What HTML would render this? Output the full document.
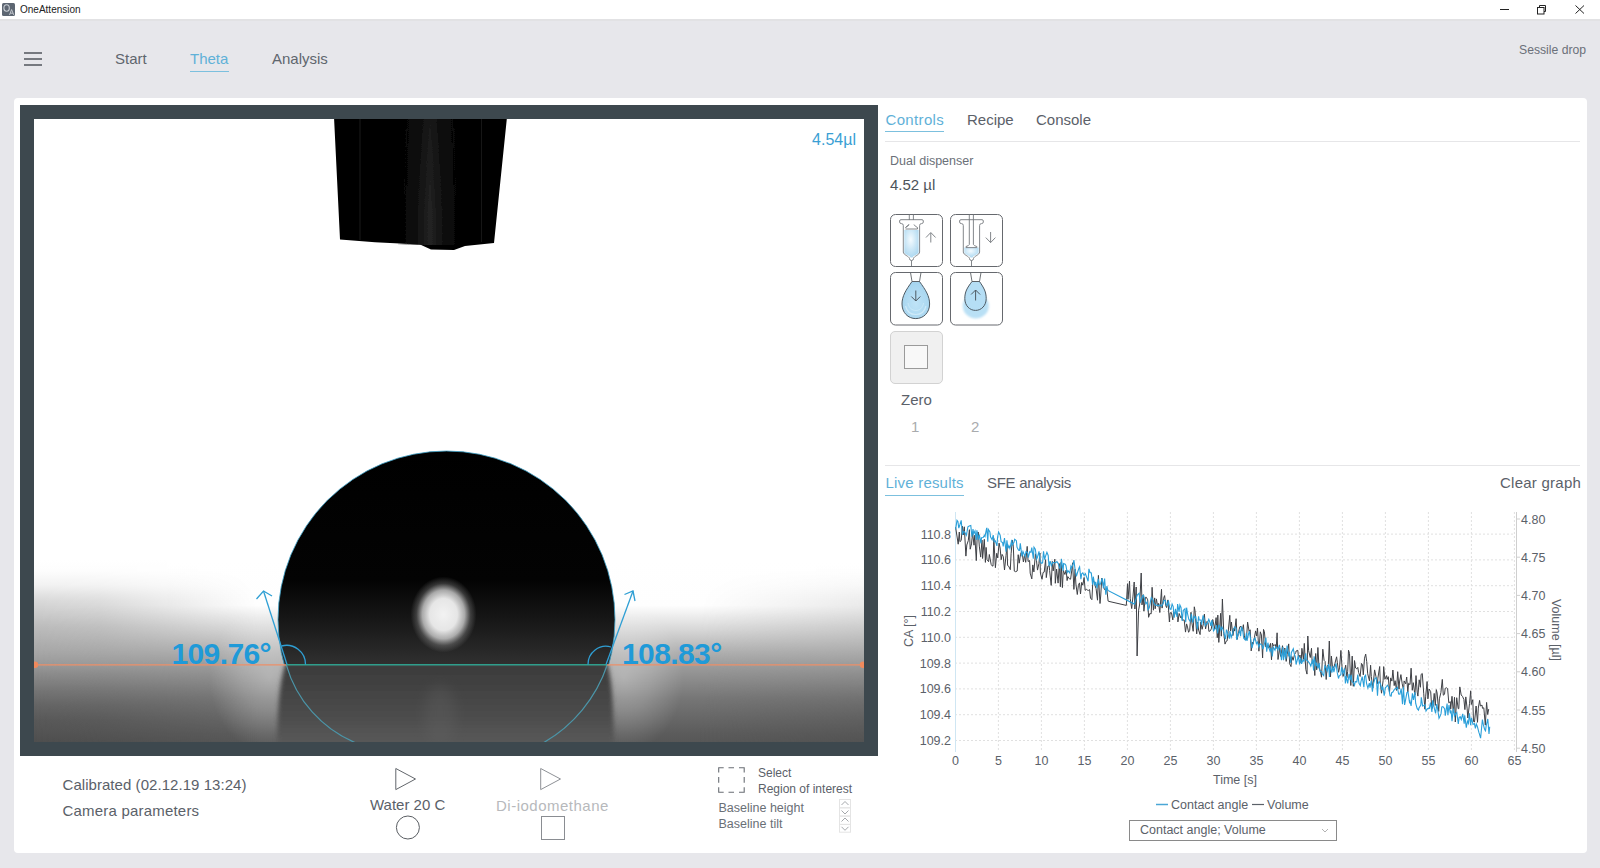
<!DOCTYPE html>
<html><head><meta charset="utf-8">
<style>
*{margin:0;padding:0;box-sizing:border-box}
html,body{width:1600px;height:868px;overflow:hidden;background:#e7e7eb;font-family:"Liberation Sans",sans-serif;color:#5b6169}
.a{position:absolute;white-space:nowrap}
#title{position:absolute;left:0;top:0;width:1600px;height:19px;background:#fff}
#panel{position:absolute;left:14px;top:98px;width:1573px;height:755px;background:#fff;border-radius:4px}
</style></head><body>
<div id="title">
  <svg class="a" style="left:2px;top:3px" width="14" height="14" viewBox="0 0 14 14"><rect x="0" y="0" width="13" height="13" rx="1.5" fill="#5d6672"/><ellipse cx="4.6" cy="5" rx="2.7" ry="3.3" fill="none" stroke="#c9ced4" stroke-width="1.1"/><path d="M7.5 12 L9.6 6.5 L11.8 12 M8.3 10.2 H11" fill="none" stroke="#c9ced4" stroke-width="0.9"/></svg>
  <div class="a" style="left:20px;top:4px;font-size:10px;color:#222">OneAttension</div>
  <div class="a" style="left:1500px;top:8.5px;width:8.5px;height:1px;background:#222"></div>
  <svg class="a" style="left:1536px;top:4px" width="11" height="11"><rect x="1.5" y="3.5" width="6.5" height="6.5" fill="none" stroke="#222"/><path d="M3.5 3.5V1.5H9.5V7.5H8" fill="none" stroke="#222"/></svg>
  <svg class="a" style="left:1575px;top:5px" width="10" height="9"><path d="M0.5 0.5L9 8.5M9 0.5L0.5 8.5" stroke="#222" stroke-width="1"/></svg>
</div>
<div class="a" style="left:0;top:19px;width:1600px;height:1.5px;background:#e2e2e4"></div>
<!-- header -->
<div class="a" style="left:24px;top:52px;width:18px;height:2px;background:#76797f"></div>
<div class="a" style="left:24px;top:58px;width:18px;height:2px;background:#76797f"></div>
<div class="a" style="left:24px;top:64px;width:18px;height:2px;background:#76797f"></div>
<div class="a" style="left:115px;top:50px;font-size:15px;color:#5f666e">Start</div>
<div class="a" style="left:190px;top:50px;font-size:15px;color:#5fb1d8">Theta</div>
<div class="a" style="left:190px;top:70.5px;width:39px;height:1.5px;background:#7cc0de"></div>
<div class="a" style="left:272px;top:50px;font-size:15px;color:#5f666e">Analysis</div>
<div class="a" style="left:1519px;top:43px;font-size:12.2px;color:#6b7079">Sessile drop</div>

<div id="panel"></div>

<!-- camera -->
<svg class="a" style="left:20px;top:105px" width="858" height="651" viewBox="20 105 858 651">
  <defs>
    <linearGradient id="bg" x1="0" y1="560" x2="0" y2="742" gradientUnits="userSpaceOnUse">
      <stop offset="0" stop-color="#fff"/>
      <stop offset="0.06" stop-color="#fdfdfd"/>
      <stop offset="0.137" stop-color="#f2f2f2"/>
      <stop offset="0.22" stop-color="#dadada"/>
      <stop offset="0.368" stop-color="#bcbcbc"/>
      <stop offset="0.511" stop-color="#a6a6a6"/>
      <stop offset="0.571" stop-color="#9a9a9a"/>
      <stop offset="0.632" stop-color="#8a8a8a"/>
      <stop offset="0.714" stop-color="#767676"/>
      <stop offset="0.797" stop-color="#656565"/>
      <stop offset="0.879" stop-color="#595959"/>
      <stop offset="1" stop-color="#4f4f4f"/>
    </linearGradient>
    <linearGradient id="bgc" x1="0" y1="560" x2="0" y2="742" gradientUnits="userSpaceOnUse">
      <stop offset="0" stop-color="#fff"/>
      <stop offset="0.25" stop-color="#fefefe"/>
      <stop offset="0.38" stop-color="#d8d8d8"/>
      <stop offset="0.505" stop-color="#b0b0b0"/>
      <stop offset="0.57" stop-color="#9e9e9e"/>
      <stop offset="0.76" stop-color="#767676"/>
      <stop offset="0.95" stop-color="#5c5c5c"/>
      <stop offset="1" stop-color="#575757"/>
    </linearGradient>
    <linearGradient id="hmask" x1="34" y1="0" x2="864" y2="0" gradientUnits="userSpaceOnUse">
      <stop offset="0" stop-color="#000"/>
      <stop offset="0.08" stop-color="#222"/>
      <stop offset="0.27" stop-color="#fff"/>
      <stop offset="0.80" stop-color="#fff"/>
      <stop offset="1" stop-color="#888"/>
    </linearGradient>
    <mask id="rmask"><rect x="34" y="119" width="830" height="623" fill="url(#hmask)"/></mask>
    <filter id="grain" x="0" y="0" width="100%" height="100%"><feTurbulence type="fractalNoise" baseFrequency="0.9" numOctaves="1" seed="3"/><feColorMatrix values="0 0 0 0 0.5  0 0 0 0 0.5  0 0 0 0 0.5  0.33 0.33 0.33 0 -0.5"/></filter>
    <filter id="blur8" x="-100%" y="-100%" width="300%" height="300%"><feGaussianBlur stdDeviation="9"/></filter>
    <linearGradient id="dropg" x1="0" y1="451" x2="0" y2="665" gradientUnits="userSpaceOnUse">
      <stop offset="0" stop-color="#000"/>
      <stop offset="0.6" stop-color="#030303"/>
      <stop offset="0.8" stop-color="#181818"/>
      <stop offset="1" stop-color="#303030"/>
    </linearGradient>
    <linearGradient id="reflg" x1="0" y1="665" x2="0" y2="742" gradientUnits="userSpaceOnUse">
      <stop offset="0" stop-color="#3c3c3c"/>
      <stop offset="0.5" stop-color="#474747"/>
      <stop offset="1" stop-color="#585858"/>
    </linearGradient>
    <linearGradient id="ndl" x1="395" y1="0" x2="465" y2="0" gradientUnits="userSpaceOnUse">
      <stop offset="0" stop-color="#050505" stop-opacity="0"/>
      <stop offset="0.5" stop-color="#242424"/>
      <stop offset="1" stop-color="#050505" stop-opacity="0"/>
    </linearGradient>
    <linearGradient id="ndlmg" x1="0" y1="119" x2="0" y2="245" gradientUnits="userSpaceOnUse">
      <stop offset="0" stop-color="#aaa"/>
      <stop offset="0.75" stop-color="#fff"/>
      <stop offset="1" stop-color="#fff"/>
    </linearGradient>
    <mask id="ndlm"><rect x="390" y="117" width="80" height="130" fill="url(#ndlmg)"/></mask>
    <radialGradient id="hlg" cx="0.5" cy="0.5" r="0.5">
      <stop offset="0" stop-color="#f2f2f2"/>
      <stop offset="0.42" stop-color="#e6e6e6"/>
      <stop offset="0.64" stop-color="#d0d0d0" stop-opacity="0.8"/>
      <stop offset="0.82" stop-color="#c0c0c0" stop-opacity="0.25"/>
      <stop offset="1" stop-color="#c0c0c0" stop-opacity="0"/>
    </radialGradient>
    <radialGradient id="halo" cx="0.62" cy="0.45" r="0.5">
      <stop offset="0" stop-color="#fff" stop-opacity="0.32"/>
      <stop offset="0.45" stop-color="#fff" stop-opacity="0.2"/>
      <stop offset="1" stop-color="#fff" stop-opacity="0"/>
    </radialGradient>
    <radialGradient id="halo2" cx="0.38" cy="0.45" r="0.5">
      <stop offset="0" stop-color="#fff" stop-opacity="0.32"/>
      <stop offset="0.45" stop-color="#fff" stop-opacity="0.2"/>
      <stop offset="1" stop-color="#fff" stop-opacity="0"/>
    </radialGradient>
    <clipPath id="imgclip"><rect x="34" y="119" width="830" height="623"/></clipPath>
    <clipPath id="above"><rect x="34" y="119" width="830" height="546"/></clipPath>
    <clipPath id="below"><rect x="34" y="665" width="830" height="77"/></clipPath>
    <filter id="blur2" x="-20%" y="-20%" width="140%" height="140%"><feGaussianBlur stdDeviation="2"/></filter>
    <filter id="blur4" x="-50%" y="-50%" width="200%" height="200%"><feGaussianBlur stdDeviation="5"/></filter>
    <filter id="blur3" x="-20%" y="-20%" width="140%" height="140%"><feGaussianBlur stdDeviation="3.5"/></filter>
    <filter id="blur5" x="-80%" y="-80%" width="260%" height="260%"><feGaussianBlur stdDeviation="6.5"/></filter>
    <filter id="blur1"><feGaussianBlur stdDeviation="0.6"/></filter>
  </defs>
  <rect x="20" y="105" width="858" height="651" fill="#3d484e"/>
  <g clip-path="url(#imgclip)">
    <rect x="34" y="119" width="830" height="623" fill="url(#bg)"/>
    <rect x="34" y="540" width="830" height="202" fill="url(#bgc)" mask="url(#rmask)"/>
    <ellipse cx="255" cy="685" rx="60" ry="75" fill="url(#halo)"/>
    <ellipse cx="638" cy="685" rx="60" ry="75" fill="url(#halo2)"/>
    <!-- needle -->
    <g filter="url(#blur1)">
    <path d="M334 117 L498 117 L507 117 L494 243 L465 246 L454 250 L431 249.5 L420 244.4 L375 242.2 L340 239.5 Z" fill="#040404"/>
    <rect x="398" y="117" width="66" height="128" fill="url(#ndl)" mask="url(#ndlm)"/>
    <rect x="359.5" y="117" width="1" height="123" fill="#151515"/>
    <rect x="481" y="117" width="1" height="125" fill="#121212"/>
    </g>
    <!-- reflection -->
    <g clip-path="url(#below)" filter="url(#blur2)">
      <path d="M286 662 C280 680 278 700 277 745 L614 745 C613 700 612 680 607 662 Z" fill="url(#reflg)"/>
    </g>
    <ellipse cx="440" cy="715" rx="16" ry="30" fill="#666" opacity="0.3" filter="url(#blur5)"/>
    <!-- drop -->
    <g clip-path="url(#above)">
      <circle cx="446.5" cy="619.5" r="168.5" fill="url(#dropg)"/>
    </g>
    <ellipse cx="443.5" cy="614.5" rx="33" ry="38" fill="url(#hlg)"/>
    <!-- fitted contour -->
    <g clip-path="url(#above)"><circle cx="446.5" cy="619.5" r="168.5" fill="none" stroke="#3b9fc6" stroke-width="1" opacity="0.8"/></g>
    <path d="M286.3 664.8 A120 120 0 0 0 356 743" fill="none" stroke="#4b95a8" stroke-width="1.2"/>
    <path d="M607.3 664.8 A142 142 0 0 1 543 743" fill="none" stroke="#4b95a8" stroke-width="1.2"/>
    <!-- baseline -->
    <line x1="34" y1="664.8" x2="287" y2="664.8" stroke="#ec8f68" stroke-width="1.2"/>
    <line x1="606" y1="664.8" x2="864" y2="664.8" stroke="#ec8f68" stroke-width="1.2"/>
    <line x1="286" y1="664.8" x2="607" y2="664.8" stroke="#2f9e8c" stroke-width="1.5"/>
    <circle cx="35" cy="664.8" r="3.2" fill="#f08a5d"/>
    <circle cx="863" cy="664.8" r="3.2" fill="#f08a5d"/>
    <!-- tangents -->
    <path d="M287 664.5 L263.5 591" fill="none" stroke="#2f9fd4" stroke-width="1.3"/>
    <path d="M256.5 599 L263.5 591 L272 596" fill="none" stroke="#2f9fd4" stroke-width="1.3"/>
    <path d="M606 664.5 L633 591" fill="none" stroke="#2f9fd4" stroke-width="1.3"/>
    <path d="M624.5 594.5 L633 591 L635 601" fill="none" stroke="#2f9fd4" stroke-width="1.3"/>
    <path d="M281.5 646 A19 19 0 0 1 305.5 664.5" fill="none" stroke="#2f9fd4" stroke-width="1.3"/>
    <path d="M588 664.5 A18 18 0 0 1 611 647" fill="none" stroke="#2f9fd4" stroke-width="1.3"/>
  </g>
  <text x="271" y="664" font-family="Liberation Sans" font-weight="bold" font-size="30" letter-spacing="-0.6" fill="#1f9ad8" text-anchor="end">109.76°</text>
  <text x="622" y="664" font-family="Liberation Sans" font-weight="bold" font-size="30" letter-spacing="-0.6" fill="#1f9ad8">108.83°</text>
  <text x="856" y="145" font-family="Liberation Sans" font-size="16" fill="#3a9fd4" text-anchor="end">4.54µl</text>
</svg>

<!-- bottom left -->
<div class="a" style="left:62.5px;top:776px;font-size:15px;letter-spacing:0.05px">Calibrated (02.12.19 13:24)</div>
<div class="a" style="left:62.5px;top:801.5px;font-size:15px;letter-spacing:0.2px">Camera parameters</div>
<svg class="a" style="left:390px;top:764px" width="30" height="30" viewBox="390 764 30 30"><path d="M395.8 768.5 L415.5 779 L395.8 789.6 Z" fill="none" stroke="#62666b" stroke-width="1"/></svg>
<div class="a" style="left:370px;top:795.5px;font-size:15px;color:#5b6169">Water 20 C</div>
<svg class="a" style="left:392px;top:813px" width="32" height="32" viewBox="392 813 32 32"><circle cx="407.9" cy="827.5" r="11.5" fill="none" stroke="#5a5e63" stroke-width="1"/></svg>
<svg class="a" style="left:535px;top:764px" width="30" height="30" viewBox="535 764 30 30"><path d="M540.7 768.5 L560.5 779 L540.7 789.6 Z" fill="none" stroke="#8e9196" stroke-width="1"/></svg>
<div class="a" style="left:496px;top:796.5px;font-size:15px;letter-spacing:0.5px;color:#b7b9bc">Di-iodomethane</div>
<div class="a" style="left:541px;top:816px;width:24px;height:23.5px;border:1px solid #8a8d92"></div>
<svg class="a" style="left:715px;top:765px" width="32" height="32" viewBox="715 765 32 32"><path d="M718.7 772.5 V767.7 H723.7 M728.5 767.7 H734 M739 767.7 H744.2 V772.5 M718.7 777 V782.7 M744.2 777 V782.7 M718.7 787.3 V792.3 H723.7 M728.5 792.3 H734 M739 792.3 H744.2 V787.3" fill="none" stroke="#6a6e74" stroke-width="1.1"/></svg>
<div class="a" style="left:758px;top:766px;font-size:12px;color:#5b6169">Select</div>
<div class="a" style="left:758px;top:782px;font-size:12px;color:#5b6169">Region of interest</div>
<div class="a" style="left:718.5px;top:800.5px;font-size:12.5px;color:#6a6f76">Baseline height</div>
<div class="a" style="left:718.5px;top:817px;font-size:12.5px;color:#6a6f76">Baseline tilt</div>
<svg class="a" style="left:836px;top:797px" width="18" height="38" viewBox="836 797 18 38"><g fill="none" stroke="#e4e4e4" stroke-width="1"><rect x="839.5" y="799.5" width="11" height="8.3"/><rect x="839.5" y="807.8" width="11" height="8.3"/><rect x="839.5" y="816.1" width="11" height="8.3"/><rect x="839.5" y="824.4" width="11" height="7.8"/></g><path d="M841.5 805 L845 801.5 L848.5 805 M841.5 810.5 L845 814 L848.5 810.5 M841.5 821.5 L845 818 L848.5 821.5 M841.5 826.8 L845 830.3 L848.5 826.8" fill="none" stroke="#9a9da2" stroke-width="0.9"/></svg>

<!-- right panel -->
<div class="a" style="left:885.5px;top:110.5px;font-size:15px;letter-spacing:0.35px;color:#5fb1d8">Controls</div>
<div class="a" style="left:885px;top:130.5px;width:59px;height:1.5px;background:#7cc0de"></div>
<div class="a" style="left:967px;top:110.5px;font-size:15px">Recipe</div>
<div class="a" style="left:1036px;top:110.5px;font-size:15px">Console</div>
<div class="a" style="left:885px;top:141px;width:695px;height:1px;background:#e6e6e8"></div>
<div class="a" style="left:890px;top:154px;font-size:12.5px;color:#6b7078">Dual dispenser</div>
<div class="a" style="left:890px;top:176px;font-size:15px;color:#4d535a">4.52 µl</div>

<svg class="a" style="left:880px;top:205px" width="130" height="125" viewBox="880 205 130 125">
  <defs>
    <radialGradient id="liq" cx="0.45" cy="0.35" r="0.7">
      <stop offset="0" stop-color="#f4fbff"/>
      <stop offset="0.5" stop-color="#cde8f7"/>
      <stop offset="1" stop-color="#a9d6ef"/>
    </radialGradient>
    <radialGradient id="drp" cx="0.5" cy="0.6" r="0.6">
      <stop offset="0" stop-color="#bfe3f7"/>
      <stop offset="1" stop-color="#a4d4ef"/>
    </radialGradient>
    <filter id="ib"><feGaussianBlur stdDeviation="1.2"/></filter>
  </defs>
  <g fill="none" stroke="#66696e" stroke-width="1">
    <rect x="890.5" y="214.5" width="52" height="52" rx="5"/>
    <rect x="950.5" y="214.5" width="52" height="52" rx="5"/>
    <rect x="890.5" y="272.5" width="52" height="52.5" rx="5"/>
    <rect x="950.5" y="272.5" width="52" height="52.5" rx="5"/>
  </g>
  <!-- syringe 1 -->
  <path d="M904.3 230 H918.6 V252 C918.6 254.5 913 255.5 912.5 257.5 H910.5 C910 255.5 904.3 254.5 904.3 252 Z" fill="url(#liq)"/>
  <g fill="none" stroke="#75797e" stroke-width="0.9">
    <path d="M909.3 214.5 V220 M913.4 214.5 V220"/>
    <path d="M901 219.7 H922 Q923.3 219.7 923.3 221 V222 Q923.3 223.6 921.5 223.6 Q919.6 223.6 919.6 225.5 V252 C919.6 255 914 256 913.5 258.5 Q913.5 260.5 911.5 260.5 Q909.5 260.5 909.5 258.5 C909 256 903.3 255 903.3 252 V225.5 Q903.3 223.6 901.5 223.6 Q899.6 223.6 899.6 222 V221 Q899.6 219.7 901 219.7 M911.5 260.5 V266"/>
    <path d="M905.5 229 H917.5 V227.5 Q915 226.5 914 224.5 M909 224.5 Q908 226.5 905.5 227.5 Z"/>
    <path d="M930.8 242.5 V233 M926 237.5 L930.8 232.5 L935.6 237.5"/>
  </g>
  <!-- syringe 2 -->
  <path d="M964.3 247.5 H978.6 V252 C978.6 254.5 973 255.5 972.5 257.5 H970.5 C970 255.5 964.3 254.5 964.3 252 Z" fill="url(#liq)"/>
  <g fill="none" stroke="#75797e" stroke-width="0.9">
    <path d="M969.3 214.5 V244.5 M973.4 214.5 V244.5 M969.3 244.5 Q968.5 246 966 246.5 V247.6 H976.8 V246.5 Q974.3 246 973.4 244.5"/>
    <path d="M961 219.7 H982 Q983.3 219.7 983.3 221 V222 Q983.3 223.6 981.5 223.6 Q979.6 223.6 979.6 225.5 V252 C979.6 255 974 256 973.5 258.5 Q973.5 260.5 971.5 260.5 Q969.5 260.5 969.5 258.5 C969 256 963.3 255 963.3 252 V225.5 Q963.3 223.6 961.5 223.6 Q959.6 223.6 959.6 222 V221 Q959.6 219.7 961 219.7 M971.5 260.5 V266"/>
    <path d="M990.6 232 V242.5 M985.8 237.6 L990.6 242.6 L995.4 237.6"/>
  </g>
  <!-- drop 1 -->
  <path d="M912 281.5 C906 290 902 296 902 304 C902 312.5 908 318.6 915.8 318.6 C923.6 318.6 929.6 312.5 929.6 304 C929.6 296 925.6 290 919.5 281.5 Z" fill="url(#drp)" stroke="#4e5a63" stroke-width="1"/>
  <path d="M905.5 306 C907 312 911 314.5 915.8 314.5 C920.6 314.5 924.6 312 926 306" fill="none" stroke="#d6eefa" stroke-width="1.2" opacity="0.8"/>
  <path d="M908 303 C909 308 912 310.5 915.8 310.5 C919.6 310.5 922.6 308 923.6 303" fill="none" stroke="#d6eefa" stroke-width="1" opacity="0.6"/>
  <g fill="none" stroke="#5f6368" stroke-width="0.9">
    <path d="M910.5 272.5 L912 281.5 H919.5 L921 272.5"/>
  </g>
  <g fill="none" stroke="#4e5a63" stroke-width="1">
    <path d="M915.8 290.5 V301 M911.3 296.5 L915.8 301 L920.3 296.5"/>
  </g>
  <!-- drop 2 -->
  <ellipse cx="975.8" cy="306" rx="13" ry="12.5" fill="#b9e0f5" filter="url(#ib)"/>
  <path d="M972 281.5 C967 288 964.8 292 964.8 298.5 C964.8 305.5 969.5 310.4 975.5 310.4 C981.5 310.4 986.2 305.5 986.2 298.5 C986.2 292 984 288 979.5 281.5 Z" fill="#b5def5" stroke="#4e5a63" stroke-width="1"/>
  <g fill="none" stroke="#5f6368" stroke-width="0.9">
    <path d="M970.5 272.5 L972 281.5 H979.5 L981 272.5"/>
  </g>
  <g fill="none" stroke="#4e5a63" stroke-width="1">
    <path d="M975.6 300.5 V290 M971.1 294.5 L975.6 290 L980.1 294.5"/>
  </g>
</svg>
<div class="a" style="left:890px;top:331px;width:52.5px;height:52.5px;border:1px solid #d2d2d2;border-radius:5px;background:#f0f0f0"></div>
<div class="a" style="left:904px;top:345px;width:24px;height:24px;border:1px solid #9a9a9a;background:#f8f8f8"></div>
<div class="a" style="left:901px;top:391px;font-size:15px;color:#5b6169">Zero</div>
<div class="a" style="left:911px;top:418px;font-size:15px;color:#a9abae">1</div>
<div class="a" style="left:971px;top:418px;font-size:15px;color:#a9abae">2</div>

<div class="a" style="left:885px;top:465px;width:695px;height:1px;background:#e6e6e8"></div>
<div class="a" style="left:885.5px;top:473.5px;font-size:15px;letter-spacing:0.2px;color:#5fb1d8">Live results</div>
<div class="a" style="left:885px;top:494.5px;width:79px;height:1.5px;background:#7cc0de"></div>
<div class="a" style="left:987px;top:473.5px;font-size:15px;letter-spacing:-0.3px">SFE analysis</div>
<div class="a" style="left:1500px;top:473.5px;font-size:15px;letter-spacing:0.25px">Clear graph</div>

<!-- chart -->
<svg class="a" style="left:880px;top:500px" width="720" height="350" viewBox="880 500 720 350">
  <g stroke="#e0e0e0" stroke-width="1" stroke-dasharray="2 2">
    <line x1="955" y1="534.1" x2="1515" y2="534.1"/><line x1="955" y1="559.9" x2="1515" y2="559.9"/><line x1="955" y1="585.7" x2="1515" y2="585.7"/><line x1="955" y1="611.5" x2="1515" y2="611.5"/><line x1="955" y1="637.3" x2="1515" y2="637.3"/><line x1="955" y1="663.1" x2="1515" y2="663.1"/><line x1="955" y1="688.9" x2="1515" y2="688.9"/><line x1="955" y1="714.7" x2="1515" y2="714.7"/><line x1="955" y1="740.5" x2="1515" y2="740.5"/>
    <line x1="998.4" y1="512" x2="998.4" y2="752"/><line x1="1041.4" y1="512" x2="1041.4" y2="752"/><line x1="1084.4" y1="512" x2="1084.4" y2="752"/><line x1="1127.4" y1="512" x2="1127.4" y2="752"/><line x1="1170.4" y1="512" x2="1170.4" y2="752"/><line x1="1213.4" y1="512" x2="1213.4" y2="752"/><line x1="1256.4" y1="512" x2="1256.4" y2="752"/><line x1="1299.4" y1="512" x2="1299.4" y2="752"/><line x1="1342.4" y1="512" x2="1342.4" y2="752"/><line x1="1385.4" y1="512" x2="1385.4" y2="752"/><line x1="1428.4" y1="512" x2="1428.4" y2="752"/><line x1="1471.4" y1="512" x2="1471.4" y2="752"/><line x1="1514.4" y1="512" x2="1514.4" y2="752"/>
  </g>
  <line x1="955.5" y1="512" x2="955.5" y2="752" stroke="#cfe6f3" stroke-width="1"/>
  <line x1="1516.5" y1="512" x2="1516.5" y2="752" stroke="#cfcfcf" stroke-width="1"/>
  <line x1="1516" y1="519.0" x2="1520" y2="519.0" stroke="#cfcfcf"/><line x1="1516" y1="557.2" x2="1520" y2="557.2" stroke="#cfcfcf"/><line x1="1516" y1="595.4" x2="1520" y2="595.4" stroke="#cfcfcf"/><line x1="1516" y1="633.6" x2="1520" y2="633.6" stroke="#cfcfcf"/><line x1="1516" y1="671.8" x2="1520" y2="671.8" stroke="#cfcfcf"/><line x1="1516" y1="710.0" x2="1520" y2="710.0" stroke="#cfcfcf"/><line x1="1516" y1="748.2" x2="1520" y2="748.2" stroke="#cfcfcf"/>
  <path d="M955.6,527.3 L956.5,533.0 L958.2,544.2 L959.3,532.0 L959.9,541.7 L961.2,540.5 L962.4,526.2 L963.2,535.0 L964.3,526.8 L965.9,556.1 L966.8,545.0 L968.3,540.6 L969.4,529.7 L970.2,549.2 L971.5,543.9 L972.6,532.7 L974.0,545.2 L974.8,535.2 L976.3,560.6 L977.3,533.1 L978.3,532.0 L979.3,546.1 L980.7,557.1 L982.0,540.1 L982.6,558.5 L984.3,539.3 L985.4,562.4 L986.1,547.4 L987.0,559.6 L988.6,561.7 L989.3,554.5 L991.2,564.5 L991.9,565.7 L993.0,566.1 L993.8,538.5 L995.4,567.7 L996.7,553.3 L997.7,557.9 L999.1,543.1 L1000.1,548.0 L1001.2,559.7 L1002.1,554.4 L1003.3,556.6 L1004.5,570.0 L1006.0,555.7 L1007.0,545.6 L1007.6,565.5 L1008.7,566.2 L1010.3,569.7 L1011.1,553.7 L1012.3,540.1 L1013.3,546.1 L1014.3,571.1 L1015.6,571.7 L1017.2,571.0 L1018.2,554.7 L1019.2,563.2 L1020.5,554.3 L1021.6,551.6 L1022.4,554.7 L1023.4,562.0 L1024.5,554.8 L1025.7,562.3 L1027.2,546.4 L1028.1,561.5 L1029.6,560.5 L1030.2,573.1 L1031.8,578.9 L1032.8,564.9 L1033.9,571.9 L1035.4,553.8 L1036.5,560.7 L1037.5,570.1 L1038.9,563.6 L1039.9,553.0 L1040.4,573.1 L1042.0,579.3 L1043.1,572.5 L1044.2,572.1 L1045.6,559.6 L1046.3,577.6 L1047.8,566.2 L1049.2,565.7 L1049.6,570.5 L1051.2,585.4 L1052.3,561.4 L1053.2,570.9 L1054.8,559.2 L1055.3,583.3 L1056.6,569.0 L1058.1,583.1 L1059.3,563.6 L1060.4,586.7 L1061.1,562.4 L1062.4,587.6 L1063.3,570.4 L1064.9,574.5 L1066.2,570.0 L1067.1,580.6 L1067.8,576.6 L1069.3,578.8 L1070.6,579.2 L1071.8,570.1 L1072.6,562.8 L1073.9,589.4 L1075.1,569.2 L1075.9,584.0 L1077.3,594.5 L1078.4,585.3 L1079.5,582.9 L1080.5,594.0 L1081.7,582.4 L1082.8,585.2 L1084.1,577.5 L1085.2,590.4 L1086.3,589.3 L1087.2,590.0 L1088.7,590.4 L1089.6,589.6 L1090.5,598.1 L1091.9,599.7 L1092.9,580.1 L1094.4,582.3 L1095.1,585.8 L1096.1,588.7 L1097.5,600.2 L1098.4,575.4 L1100.0,603.5 L1100.7,596.0 L1101.8,578.1 L1103.2,585.1 L1104.3,589.2 L1105.3,590.3 L1106.9,589.8 L1108.1,601.1 L1108.9,601.4 L1126.3,605.4 L1127.5,583.7 L1128.0,599.3 L1129.5,581.0 L1130.2,598.3 L1131.7,608.6 L1133.0,596.1 L1134.2,582.0 L1134.9,609.0 L1136.2,587.0 L1137.1,656.0 L1138.6,610.2 L1139.7,604.0 L1141.2,573.0 L1142.0,604.9 L1143.3,594.7 L1143.9,611.1 L1145.4,597.3 L1146.4,597.3 L1147.7,599.8 L1148.6,617.3 L1149.7,613.6 L1151.2,613.8 L1152.1,587.3 L1153.4,610.2 L1154.7,597.9 L1155.2,608.8 L1156.4,598.9 L1157.7,606.4 L1158.6,603.4 L1159.8,612.5 L1161.5,589.3 L1162.1,608.1 L1163.5,598.7 L1164.6,595.6 L1165.8,605.8 L1166.6,607.6 L1167.9,599.9 L1169.4,622.0 L1170.1,612.9 L1171.4,612.6 L1172.8,619.9 L1173.6,611.8 L1174.6,614.8 L1175.6,611.9 L1177.6,613.2 L1177.9,621.9 L1179.2,613.5 L1180.8,617.9 L1181.4,616.4 L1182.5,620.2 L1184.2,619.9 L1185.5,632.1 L1186.6,623.9 L1187.5,627.1 L1188.6,632.3 L1189.7,630.3 L1191.0,612.3 L1191.8,622.2 L1193.2,631.3 L1194.3,606.8 L1195.0,610.6 L1196.7,633.9 L1197.7,622.1 L1198.6,630.1 L1200.1,634.6 L1200.8,622.1 L1202.1,629.3 L1203.5,623.4 L1204.4,614.1 L1205.6,628.9 L1207.0,621.4 L1208.1,622.9 L1208.9,631.4 L1210.2,630.9 L1211.3,628.9 L1212.7,619.5 L1213.2,621.7 L1214.7,628.8 L1216.1,617.6 L1217.3,637.7 L1217.8,615.1 L1218.8,642.4 L1220.6,613.3 L1221.3,636.2 L1222.4,599.0 L1223.8,633.4 L1225.0,644.1 L1226.2,641.2 L1227.1,640.9 L1228.2,631.5 L1229.8,615.3 L1230.5,631.0 L1231.4,622.0 L1232.9,635.6 L1234.0,628.3 L1234.7,631.1 L1236.1,618.7 L1237.2,639.4 L1238.8,631.1 L1239.8,626.8 L1241.1,626.4 L1242.2,631.1 L1243.4,624.7 L1244.3,635.2 L1245.1,639.4 L1246.4,639.7 L1247.6,622.1 L1249.1,631.3 L1250.2,629.8 L1251.2,650.9 L1252.4,642.3 L1253.0,644.2 L1254.4,637.7 L1255.6,630.9 L1256.7,636.0 L1257.5,628.0 L1258.9,651.2 L1260.3,631.8 L1261.4,635.0 L1262.6,657.9 L1263.5,629.4 L1264.4,631.7 L1265.8,647.0 L1267.3,647.2 L1267.9,646.0 L1269.0,648.2 L1270.5,643.4 L1271.5,659.8 L1272.4,643.1 L1273.7,645.9 L1275.2,644.4 L1276.2,648.4 L1277.1,632.8 L1278.0,659.5 L1279.7,648.1 L1280.6,656.4 L1281.5,651.9 L1282.5,645.7 L1283.7,657.1 L1284.8,648.0 L1286.2,661.4 L1287.2,654.5 L1288.7,643.9 L1289.7,663.9 L1291.0,666.6 L1291.9,656.5 L1293.1,660.3 L1294.5,654.6 L1295.7,652.6 L1296.1,651.0 L1297.8,650.3 L1298.5,657.9 L1300.0,655.0 L1301.1,662.9 L1301.9,648.3 L1303.4,659.4 L1304.3,643.4 L1305.8,669.5 L1307.0,674.1 L1307.8,636.0 L1308.6,650.6 L1310.3,657.5 L1311.5,648.3 L1312.2,663.5 L1313.7,660.8 L1314.8,675.5 L1315.7,653.5 L1316.7,669.8 L1317.9,647.5 L1319.0,667.6 L1320.5,671.4 L1321.5,677.2 L1322.8,649.2 L1324.1,660.4 L1325.1,661.4 L1326.2,679.5 L1327.2,665.7 L1328.4,664.5 L1329.3,641.0 L1330.5,676.8 L1331.4,656.1 L1332.6,668.1 L1334.0,667.0 L1334.9,663.5 L1336.6,656.8 L1337.3,662.2 L1338.6,672.3 L1339.5,667.9 L1340.9,650.4 L1342.3,671.1 L1343.1,676.4 L1344.0,673.2 L1345.7,665.2 L1346.9,677.7 L1347.7,671.3 L1348.5,650.2 L1349.5,653.5 L1350.8,685.5 L1352.2,656.1 L1353.3,686.3 L1354.5,660.6 L1355.6,668.0 L1356.8,668.9 L1357.8,667.4 L1358.6,672.4 L1360.1,676.5 L1361.5,663.4 L1362.5,664.8 L1363.3,674.8 L1364.5,658.2 L1365.7,654.1 L1366.7,661.5 L1367.7,673.8 L1369.5,681.0 L1370.6,665.2 L1371.3,676.5 L1372.8,688.1 L1373.4,682.3 L1374.6,669.9 L1376.0,676.8 L1377.4,683.9 L1377.9,678.1 L1379.7,666.5 L1380.3,682.9 L1381.5,693.2 L1383.1,680.7 L1383.7,666.6 L1384.9,679.3 L1386.6,675.6 L1387.1,679.4 L1388.3,676.7 L1389.5,692.4 L1390.7,677.9 L1391.9,681.1 L1392.9,670.0 L1394.2,685.6 L1395.1,680.7 L1396.5,690.4 L1397.7,671.7 L1399.0,689.1 L1399.5,682.0 L1400.9,674.6 L1402.2,683.8 L1403.6,690.3 L1404.1,680.9 L1405.7,683.8 L1406.7,677.0 L1407.8,691.9 L1408.6,683.3 L1410.0,684.6 L1411.1,668.2 L1412.3,690.3 L1413.3,682.7 L1414.9,695.2 L1416.0,675.6 L1417.2,692.1 L1417.9,696.1 L1419.2,679.8 L1420.4,687.3 L1421.1,674.4 L1422.3,673.5 L1423.7,693.2 L1424.9,709.2 L1425.7,696.2 L1427.1,681.5 L1427.9,698.9 L1429.1,689.0 L1430.7,691.7 L1431.8,708.8 L1433.1,705.9 L1434.2,693.4 L1435.3,705.4 L1436.3,689.6 L1437.1,693.0 L1438.7,711.4 L1439.4,698.8 L1440.9,692.5 L1442.3,679.4 L1443.3,695.2 L1444.5,694.3 L1445.2,688.4 L1446.5,687.8 L1447.6,688.6 L1448.8,702.8 L1450.3,701.7 L1450.7,709.1 L1452.0,696.3 L1453.3,712.6 L1454.5,697.3 L1455.3,722.0 L1456.7,697.7 L1458.2,708.7 L1458.8,708.7 L1459.8,686.9 L1461.2,695.0 L1462.5,696.4 L1463.9,699.5 L1464.9,709.6 L1465.8,696.9 L1467.1,708.2 L1467.8,718.0 L1469.5,703.6 L1470.7,690.8 L1471.3,704.5 L1472.8,699.7 L1473.5,721.5 L1474.5,722.0 L1476.1,706.0 L1477.5,722.3 L1478.3,708.1 L1479.6,700.4 L1480.4,706.0 L1482.0,705.1 L1482.5,708.3 L1483.8,707.8 L1485.3,725.1 L1486.6,702.4 L1487.7,714.5 L1488.7,709.1" fill="none" stroke="#3e4045" stroke-width="1"/>
  <path d="M955.6,529.4 L957.0,520.4 L957.9,521.5 L958.8,528.1 L959.8,525.0 L961.2,520.3 L962.4,534.8 L963.2,531.9 L964.4,531.6 L966.3,535.3 L967.1,531.4 L967.9,526.8 L969.2,526.1 L970.8,525.6 L971.9,536.7 L973.0,529.0 L973.7,533.8 L975.0,531.0 L976.3,539.9 L976.9,530.3 L978.4,539.6 L979.3,534.6 L981.0,543.3 L981.5,537.8 L983.1,537.5 L984.4,535.4 L985.0,536.4 L986.7,527.8 L987.8,541.7 L988.3,529.3 L989.9,531.9 L990.5,536.8 L992.1,539.7 L993.2,535.2 L994.1,541.7 L995.3,540.9 L996.9,545.9 L997.6,537.1 L998.6,532.0 L1000.2,535.3 L1001.1,541.6 L1002.6,542.6 L1003.2,546.3 L1004.5,538.0 L1006.0,551.8 L1006.9,540.4 L1008.0,548.3 L1008.9,545.6 L1009.9,548.5 L1011.8,539.9 L1012.2,545.2 L1014.0,542.4 L1014.7,539.3 L1016.4,540.7 L1017.0,547.2 L1018.6,550.3 L1019.5,550.4 L1020.3,543.4 L1021.9,556.4 L1023.0,551.6 L1024.1,554.2 L1025.1,556.3 L1026.0,551.6 L1027.5,552.4 L1028.2,557.7 L1029.8,551.6 L1030.9,552.4 L1031.8,547.6 L1033.3,558.8 L1034.0,547.2 L1035.3,549.1 L1036.7,558.9 L1037.5,557.0 L1039.0,551.3 L1040.0,561.0 L1041.4,563.3 L1042.6,562.8 L1043.5,551.4 L1044.7,559.6 L1045.3,556.8 L1046.9,552.3 L1048.2,555.5 L1049.0,566.1 L1050.2,561.2 L1051.3,565.6 L1052.8,562.4 L1053.4,562.5 L1054.7,562.7 L1055.5,562.6 L1056.9,561.5 L1058.3,563.6 L1059.6,568.1 L1060.8,567.9 L1061.4,558.9 L1063.1,570.8 L1063.6,563.5 L1065.2,564.2 L1065.9,565.4 L1067.2,572.6 L1068.1,570.8 L1069.8,573.0 L1070.9,566.4 L1071.5,567.9 L1073.0,564.5 L1073.9,560.0 L1075.2,570.4 L1076.4,576.4 L1077.2,573.5 L1079.0,567.9 L1079.6,566.8 L1080.9,579.2 L1081.7,573.7 L1082.8,572.8 L1084.1,575.5 L1085.4,573.7 L1087.0,578.1 L1088.1,581.3 L1088.9,568.9 L1090.0,572.5 L1091.3,572.9 L1092.6,584.6 L1093.3,576.7 L1094.8,585.5 L1095.7,581.8 L1097.0,588.1 L1098.2,578.9 L1099.2,584.5 L1100.5,584.1 L1101.6,579.9 L1102.2,578.3 L1103.4,588.3 L1104.6,578.5 L1105.8,594.6 L1106.9,586.1 L1107.9,590.5 L1134.5,604.1 L1135.6,600.1 L1137.0,595.5 L1137.5,594.9 L1139.1,593.2 L1140.2,602.7 L1141.4,599.3 L1142.7,595.7 L1143.6,595.3 L1144.8,600.4 L1145.9,603.7 L1147.1,602.0 L1148.0,609.7 L1149.3,607.9 L1150.6,600.6 L1151.3,597.5 L1153.1,600.2 L1154.1,603.6 L1155.4,605.0 L1156.0,605.5 L1157.2,605.1 L1158.2,605.8 L1159.2,605.3 L1160.3,604.8 L1161.6,606.1 L1163.3,603.1 L1163.8,600.3 L1165.4,600.4 L1166.2,604.5 L1167.2,605.5 L1168.4,600.7 L1170.0,609.1 L1171.0,609.3 L1172.1,604.0 L1173.2,606.6 L1174.2,617.6 L1175.5,608.9 L1177.0,616.8 L1177.6,604.1 L1179.1,611.8 L1179.9,605.0 L1181.0,607.4 L1182.2,621.0 L1183.2,610.6 L1185.0,608.7 L1185.7,622.2 L1186.6,607.7 L1187.6,614.0 L1188.8,619.3 L1190.1,621.3 L1191.4,613.8 L1192.7,622.7 L1194.1,616.4 L1195.2,617.9 L1195.8,616.4 L1197.3,629.3 L1198.6,616.4 L1199.1,619.8 L1200.9,619.9 L1201.6,624.6 L1203.1,615.3 L1203.9,618.0 L1205.2,625.7 L1206.3,623.7 L1207.1,624.0 L1208.8,619.3 L1210.0,622.5 L1210.8,626.0 L1211.9,620.1 L1213.5,630.9 L1214.2,630.0 L1215.7,628.3 L1216.5,625.2 L1217.6,633.5 L1218.7,625.4 L1219.6,625.8 L1220.9,630.3 L1222.0,627.1 L1223.0,629.4 L1224.5,635.2 L1225.6,639.1 L1226.4,629.6 L1227.7,633.1 L1229.4,638.6 L1229.9,631.1 L1231.2,637.5 L1232.8,632.8 L1233.3,629.8 L1234.7,626.9 L1236.1,628.2 L1236.7,639.8 L1237.8,635.6 L1239.7,630.7 L1240.6,636.2 L1241.4,626.6 L1242.7,630.2 L1243.7,638.2 L1245.3,640.0 L1246.5,632.8 L1247.0,640.9 L1248.5,634.2 L1249.3,631.2 L1250.6,639.2 L1252.0,648.1 L1253.2,643.0 L1253.9,639.3 L1255.1,638.1 L1256.4,643.7 L1257.5,642.0 L1258.8,646.9 L1260.1,643.7 L1260.8,644.1 L1262.1,645.2 L1262.9,649.1 L1264.3,644.4 L1265.9,637.6 L1266.7,651.8 L1267.9,642.7 L1269.0,648.0 L1270.1,651.4 L1271.5,647.8 L1272.2,656.4 L1273.4,647.3 L1275.0,650.2 L1275.8,646.9 L1277.3,647.9 L1277.8,650.3 L1279.4,644.8 L1280.3,650.5 L1281.5,660.3 L1282.9,647.0 L1283.5,660.3 L1284.9,649.4 L1285.8,659.1 L1287.1,645.5 L1288.6,655.1 L1289.4,653.1 L1290.8,663.0 L1291.3,652.7 L1293.3,648.8 L1294.4,654.6 L1295.3,656.6 L1296.1,664.5 L1297.6,658.7 L1298.3,655.6 L1299.6,664.5 L1300.5,657.9 L1301.6,663.9 L1302.9,660.0 L1304.0,661.4 L1305.7,653.4 L1306.3,659.9 L1307.9,661.0 L1308.4,661.9 L1309.6,663.2 L1310.8,666.0 L1312.6,659.3 L1313.6,670.5 L1314.1,656.3 L1316.0,666.2 L1316.6,662.6 L1317.8,668.3 L1319.2,663.1 L1320.0,671.2 L1321.7,671.5 L1322.4,674.1 L1323.7,675.6 L1324.8,665.7 L1325.7,667.0 L1327.2,671.0 L1328.6,664.0 L1329.4,676.9 L1330.1,666.0 L1331.9,672.6 L1332.9,666.2 L1333.9,672.1 L1335.2,666.2 L1336.0,663.5 L1337.2,672.4 L1338.5,678.5 L1339.2,676.1 L1340.8,674.7 L1341.6,667.2 L1342.8,673.5 L1344.5,668.5 L1345.4,683.4 L1346.2,676.1 L1347.7,683.4 L1349.1,673.8 L1350.2,680.1 L1351.2,674.9 L1352.0,681.6 L1353.3,682.5 L1354.5,685.4 L1355.2,681.7 L1356.8,681.9 L1357.8,674.6 L1359.0,683.4 L1360.3,685.6 L1360.9,681.8 L1362.2,676.7 L1363.9,687.1 L1364.5,676.6 L1365.6,675.1 L1366.6,683.6 L1367.9,688.1 L1369.3,683.2 L1370.0,687.7 L1371.3,680.5 L1372.4,691.8 L1373.5,683.6 L1375.1,678.1 L1376.4,678.1 L1377.5,695.7 L1378.3,683.3 L1379.1,681.4 L1380.5,684.0 L1381.8,690.0 L1382.8,686.5 L1384.2,695.6 L1385.4,687.6 L1386.6,686.6 L1387.4,685.3 L1388.4,686.8 L1390.1,695.8 L1391.2,696.1 L1391.7,692.7 L1392.9,692.1 L1394.4,689.4 L1395.7,688.4 L1396.9,688.7 L1397.3,686.5 L1398.6,694.0 L1399.9,694.1 L1401.2,688.5 L1402.5,704.2 L1403.4,686.7 L1404.6,705.0 L1405.5,700.3 L1406.9,692.5 L1408.0,691.9 L1409.5,702.2 L1410.0,701.1 L1411.1,706.0 L1412.4,693.4 L1413.5,700.0 L1414.8,692.1 L1415.7,703.5 L1417.2,708.7 L1418.5,710.1 L1419.0,708.0 L1420.8,705.0 L1421.3,697.3 L1422.6,705.9 L1423.9,705.4 L1425.0,704.6 L1426.0,711.0 L1427.5,708.6 L1428.7,708.2 L1429.4,708.4 L1430.5,702.6 L1431.9,712.0 L1432.7,700.4 L1434.5,709.1 L1435.6,713.4 L1436.7,704.1 L1437.5,708.2 L1439.0,718.3 L1439.8,716.7 L1441.0,713.9 L1441.8,707.0 L1442.9,706.6 L1444.6,708.7 L1445.3,715.6 L1447.1,703.6 L1447.9,715.3 L1449.0,705.1 L1450.4,713.4 L1451.1,710.5 L1452.0,721.1 L1453.3,708.6 L1454.6,715.9 L1455.5,713.9 L1456.8,712.5 L1458.3,723.9 L1459.1,717.6 L1460.2,716.7 L1461.3,719.4 L1462.7,713.9 L1464.2,723.7 L1464.7,715.3 L1466.3,727.6 L1467.4,721.1 L1468.4,723.4 L1469.5,713.4 L1470.6,725.3 L1471.5,717.9 L1473.0,724.4 L1474.4,723.6 L1475.4,728.5 L1476.3,723.9 L1477.4,726.7 L1478.9,732.4 L1479.4,733.8 L1480.6,738.2 L1482.4,719.5 L1483.3,724.4 L1484.6,729.5 L1485.5,730.8 L1486.2,725.6 L1487.8,719.0 L1489.0,733.9 L1489.7,726.8" fill="none" stroke="#2a9fd9" stroke-width="1.1"/>
  <g font-family="Liberation Sans" font-size="12.5" fill="#5b6169">
    <text x="951" y="538.6" text-anchor="end">110.8</text><text x="951" y="564.4" text-anchor="end">110.6</text><text x="951" y="590.2" text-anchor="end">110.4</text><text x="951" y="616.0" text-anchor="end">110.2</text><text x="951" y="641.8" text-anchor="end">110.0</text><text x="951" y="667.6" text-anchor="end">109.8</text><text x="951" y="693.4" text-anchor="end">109.6</text><text x="951" y="719.2" text-anchor="end">109.4</text><text x="951" y="745.0" text-anchor="end">109.2</text>
    <text x="1521" y="523.5">4.80</text><text x="1521" y="561.7">4.75</text><text x="1521" y="599.9">4.70</text><text x="1521" y="638.1">4.65</text><text x="1521" y="676.3">4.60</text><text x="1521" y="714.5">4.55</text><text x="1521" y="752.7">4.50</text>
    <text x="955.4" y="765" text-anchor="middle">0</text><text x="998.4" y="765" text-anchor="middle">5</text><text x="1041.4" y="765" text-anchor="middle">10</text><text x="1084.4" y="765" text-anchor="middle">15</text><text x="1127.4" y="765" text-anchor="middle">20</text><text x="1170.4" y="765" text-anchor="middle">25</text><text x="1213.4" y="765" text-anchor="middle">30</text><text x="1256.4" y="765" text-anchor="middle">35</text><text x="1299.4" y="765" text-anchor="middle">40</text><text x="1342.4" y="765" text-anchor="middle">45</text><text x="1385.4" y="765" text-anchor="middle">50</text><text x="1428.4" y="765" text-anchor="middle">55</text><text x="1471.4" y="765" text-anchor="middle">60</text><text x="1514.4" y="765" text-anchor="middle">65</text>
    <text x="1235" y="784" text-anchor="middle">Time [s]</text>
    <text transform="translate(913,631) rotate(-90)" text-anchor="middle">CA [°]</text>
    <text transform="translate(1552,630) rotate(90)" text-anchor="middle">Volume [µl]</text>
  </g>
  <line x1="1156" y1="804.5" x2="1168" y2="804.5" stroke="#4aa7d6" stroke-width="1.5"/>
  <text x="1171" y="809" font-family="Liberation Sans" font-size="12.5" fill="#5b6169">Contact angle</text>
  <line x1="1252" y1="804.5" x2="1264" y2="804.5" stroke="#5b6169" stroke-width="1.2"/>
  <text x="1267" y="809" font-family="Liberation Sans" font-size="12.5" fill="#5b6169">Volume</text>
  <rect x="1129.5" y="820.5" width="207" height="20" fill="#fff" stroke="#8a8a8a"/>
  <text x="1140" y="834" font-family="Liberation Sans" font-size="12.5" fill="#5b6169">Contact angle; Volume</text>
  <path d="M1322 829 L1325 832 L1328 829" fill="none" stroke="#aaa" stroke-width="0.9"/>
</svg>
</body></html>
